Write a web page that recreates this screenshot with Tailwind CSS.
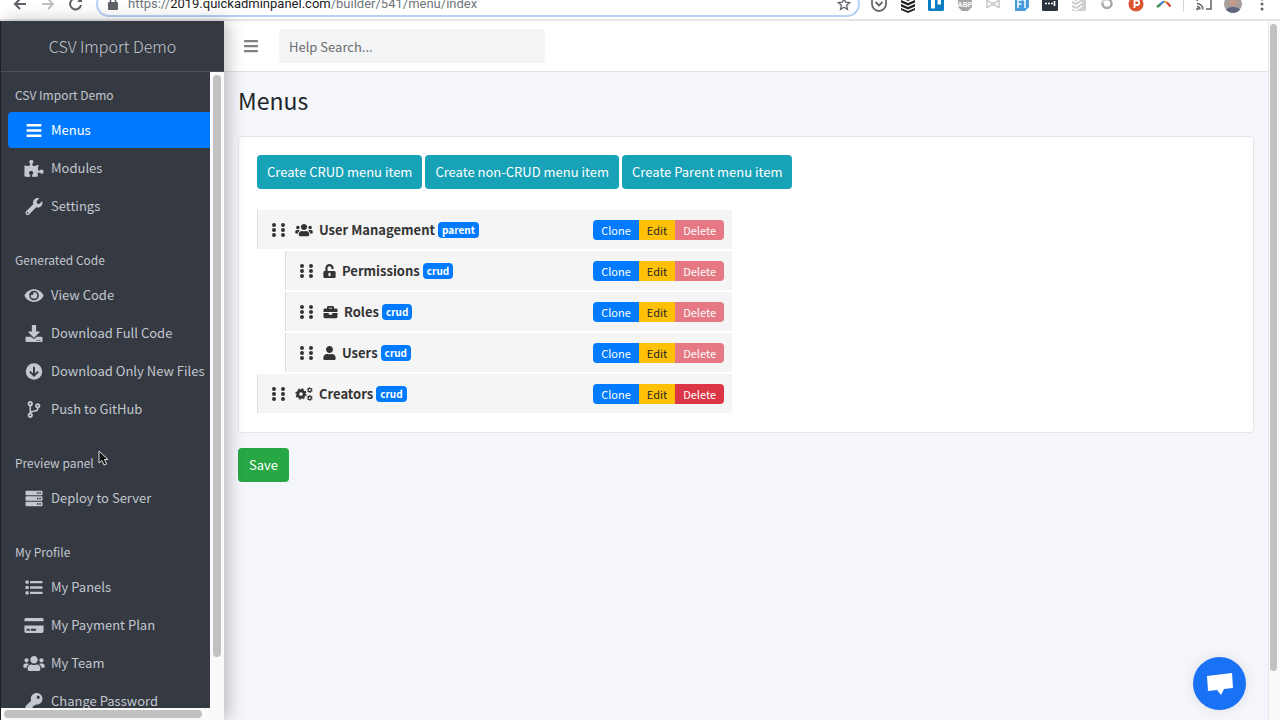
<!DOCTYPE html>
<html lang="en">
<head>
  <meta charset="UTF-8" />
  <meta name="viewport" content="width=device-width, initial-scale=1.0"/>
  <script src="https://cdn.jsdelivr.net/npm/@tailwindcss/browser@4"></script>
  <title>Menus - CSV Import Demo</title>
</head>
<body class="h-screen flex flex-col overflow-hidden bg-white font-['Noto_Sans_CJK_SC','Open_Sans',sans-serif] text-[13px] text-[#212529]">

  <!-- Icon set -->
  <svg class="hidden" xmlns="http://www.w3.org/2000/svg">
    <symbol id="bars" viewBox="0 0 448 512"><path d="M16 132h416c9 0 16-7 16-16V76c0-9-7-16-16-16H16C7 60 0 67 0 76v40c0 9 7 16 16 16zm0 160h416c9 0 16-7 16-16v-40c0-9-7-16-16-16H16c-9 0-16 7-16 16v40c0 9 7 16 16 16zm0 160h416c9 0 16-7 16-16v-40c0-9-7-16-16-16H16c-9 0-16 7-16 16v40c0 9 7 16 16 16z"/></symbol>
    <symbol id="puzzle" viewBox="0 0 576 512"><path d="M519.442 288.651c-41.519 0-59.5 31.593-82.058 31.593C377.409 320.244 432 144 432 144s-196.288 80-196.288-3.297c0-35.827 36.288-46.25 36.288-85.985C272 19.216 243.885 0 210.539 0c-34.654 0-66.366 18.891-66.366 56.346 0 41.364 31.711 59.277 31.711 81.75C175.885 207.719 0 166.758 0 166.758v333.237s178.635 41.047 178.635-28.662c0-22.473-40-40.107-40-81.471 0-37.456 29.25-56.346 63.577-56.346 33.673 0 61.788 19.216 61.788 54.717 0 39.735-36.288 50.158-36.288 85.985 0 60.803 129.675 25.73 181.23 25.73 0 0-34.725-120.101 25.827-120.101 35.962 0 46.423 36.152 86.308 36.152C556.712 416 576 387.99 576 354.443c0-34.199-18.962-65.792-56.558-65.792z"/></symbol>
    <symbol id="wrench" viewBox="0 0 512 512"><path d="M507.73 109.1c-2.24-9.03-13.54-12.09-20.12-5.51l-74.36 74.36-67.88-11.31-11.31-67.88 74.36-74.36c6.62-6.62 3.43-17.9-5.66-20.16-47.38-11.74-99.55.91-136.58 37.93-39.64 39.64-50.55 97.1-34.05 147.2L18.74 402.76c-24.99 24.99-24.99 65.51 0 90.5 24.99 24.99 65.51 24.99 90.5 0l213.21-213.21c50.12 16.71 107.47 5.68 147.37-34.22 37.07-37.07 49.7-89.32 37.91-136.73zM64 472c-13.25 0-24-10.75-24-24 0-13.26 10.75-24 24-24s24 10.74 24 24c0 13.25-10.75 24-24 24z"/></symbol>
    <symbol id="eye" viewBox="0 0 576 512"><path d="M572.52 241.4C518.29 135.59 410.93 64 288 64S57.68 135.64 3.48 241.41a32.35 32.35 0 0 0 0 29.19C57.71 376.41 165.07 448 288 448s230.32-71.64 284.52-177.41a32.35 32.35 0 0 0 0-29.19zM288 400a144 144 0 1 1 144-144 143.93 143.93 0 0 1-144 144zm0-240a95.31 95.31 0 0 0-25.31 3.79 47.85 47.85 0 0 1-66.9 66.9A95.78 95.78 0 1 0 288 160z"/></symbol>
    <symbol id="download" viewBox="0 0 512 512"><path d="M216 0h80c13.3 0 24 10.7 24 24v168h87.7c17.8 0 26.7 21.5 14.1 34.1L269.7 378.3c-7.5 7.5-19.8 7.5-27.3 0L90.1 226.1c-12.6-12.6-3.7-34.1 14.1-34.1H192V24c0-13.3 10.7-24 24-24zm296 376v112c0 13.3-10.7 24-24 24H24c-13.3 0-24-10.7-24-24V376c0-13.3 10.7-24 24-24h146.7l49 49c20.1 20.1 52.5 20.1 72.6 0l49-49H488c13.3 0 24 10.7 24 24zm-124 88c0-11-9-20-20-20s-20 9-20 20 9 20 20 20 20-9 20-20zm64 0c0-11-9-20-20-20s-20 9-20 20 9 20 20 20 20-9 20-20z"/></symbol>
    <symbol id="circle-down" viewBox="0 0 512 512"><circle cx="256" cy="256" r="248"/><path d="M256 110v270M130 258l126 126 126-126" fill="none" stroke="#353941" stroke-width="58"/></symbol>
    <symbol id="branch" viewBox="0 0 384 512"><path d="M384 144c0-44.2-35.8-80-80-80s-80 35.8-80 80c0 36.4 24.3 67.1 57.5 76.8-.6 16.1-4.2 28.5-11 36.9-15.4 19.2-49.3 22.4-85.2 25.7-28.2 2.6-57.4 5.4-81.3 16.9v-144c32.5-10.2 56-40.5 56-76.3 0-44.2-35.8-80-80-80S0 35.8 0 80c0 35.8 23.5 66.1 56 76.3v199.3C23.5 365.9 0 396.2 0 432c0 44.2 35.8 80 80 80s80-35.8 80-80c0-34-21.2-63.1-51.2-74.6 3.1-5.2 7.8-9.8 14.9-13.4 16.2-8.2 40.4-10.4 66.1-12.8 42.2-3.9 90-8.4 118.2-43.4 14-17.4 21.1-39.8 21.6-67.9 31.6-10.8 54.4-40.7 54.4-75.9zM80 54c14 0 26 12 26 26s-12 26-26 26-26-12-26-26 12-26 26-26zm0 404c-14 0-26-12-26-26s12-26 26-26 26 12 26 26-12 26-26 26zm224-340c14 0 26 12 26 26s-12 26-26 26-26-12-26-26 12-26 26-26z"/></symbol>
    <symbol id="server" viewBox="0 0 512 512"><rect y="20" width="512" height="136" rx="24"/><rect y="188" width="512" height="136" rx="24"/><rect y="356" width="512" height="136" rx="24"/><path d="M344 88h48m24 0h48M344 256h48m24 0h48M344 424h48m24 0h48" stroke="#353941" stroke-width="44"/></symbol>
    <symbol id="list" viewBox="0 0 512 512"><rect y="48" width="96" height="96" rx="20"/><rect y="208" width="96" height="96" rx="20"/><rect y="368" width="96" height="96" rx="20"/><rect x="136" y="62" width="376" height="68" rx="16"/><rect x="136" y="222" width="376" height="68" rx="16"/><rect x="136" y="382" width="376" height="68" rx="16"/></symbol>
    <symbol id="card" viewBox="0 0 576 512"><path d="M0 432c0 26.500 21.500 48 48 48h480c26.500 0 48-21.500 48-48V256H0v176zm192-68c0-6.600 5.400-12 12-12h136c6.600 0 12 5.400 12 12v40c0 6.600-5.400 12-12 12H204c-6.600 0-12-5.400-12-12v-40zm-128 0c0-6.600 5.400-12 12-12h72c6.600 0 12 5.400 12 12v40c0 6.600-5.400 12-12 12H76c-6.600 0-12-5.400-12-12v-40zM576 80v48H0V80c0-26.500 21.500-48 48-48h480c26.500 0 48 21.500 48 48z"/></symbol>
    <symbol id="users" viewBox="0 0 640 512"><path d="M96 224c35.3 0 64-28.7 64-64s-28.700-64-64-64-64 28.700-64 64 28.700 64 64 64zm448 0c35.300 0 64-28.700 64-64s-28.700-64-64-64-64 28.700-64 64 28.700 64 64 64zm32 32h-64c-17.600 0-33.500 7.100-45.100 18.600 40.300 22.100 68.900 62 75.100 109.400h66c17.700 0 32-14.300 32-32v-32c0-35.300-28.700-64-64-64zm-256 0c61.900 0 112-50.100 112-112S381.900 32 320 32 208 82.100 208 144s50.100 112 112 112zm76.800 32h-8.300c-20.800 10-43.900 16-68.500 16s-47.600-6-68.500-16h-8.300C179.600 288 128 339.600 128 403.200V432c0 26.500 21.500 48 48 48h288c26.500 0 48-21.500 48-48v-28.800c0-63.600-51.600-115.200-115.200-115.200zm-223.700-13.400C161.500 263.100 145.600 256 128 256H64c-35.300 0-64 28.700-64 64v32c0 17.700 14.300 32 32 32h65.900c6.300-47.400 34.900-87.300 75.200-109.400z"/></symbol>
    <symbol id="key" viewBox="0 0 512 512"><path d="M512 176.001C512 273.203 433.202 352 336 352c-11.220 0-22.190-1.062-32.827-3.069l-24.012 27.014A23.999 23.999 0 0 1 261.223 384H224v40c0 13.255-10.745 24-24 24h-40v40c0 13.255-10.745 24-24 24H24c-13.255 0-24-10.745-24-24v-78.059c0-6.365 2.529-12.470 7.029-16.971l161.802-161.802C163.108 213.814 160 195.271 160 176 160 78.798 238.797.001 335.999 0 433.488-.001 512 78.511 512 176.001zM336 128c0 26.510 21.490 48 48 48s48-21.490 48-48-21.490-48-48-48-48 21.490-48 48z"/></symbol>
    <symbol id="unlock" viewBox="0 0 448 512"><path d="M400 256H152V152.900c0-39.600 31.700-72.500 71.300-72.900 40-.4 72.700 32.100 72.700 72v16c0 13.300 10.700 24 24 24h32c13.300 0 24-10.700 24-24v-16C376 68 307.500-.3 223.500 0 139.500.3 72 69.500 72 153.500V256H48c-26.500 0-48 21.500-48 48v160c0 26.500 21.500 48 48 48h352c26.500 0 48-21.500 48-48V304c0-26.500-21.500-48-48-48zM264 408c0 22.100-17.900 40-40 40s-40-17.900-40-40v-48c0-22.100 17.900-40 40-40s40 17.900 40 40v48z"/></symbol>
    <symbol id="briefcase" viewBox="0 0 512 512"><path d="M320 336c0 8.840-7.160 16-16 16h-96c-8.840 0-16-7.160-16-16v-48H0v144c0 25.600 22.400 48 48 48h416c25.600 0 48-22.400 48-48V288H320v48zm144-208h-80V80c0-25.600-22.400-48-48-48H176c-25.600 0-48 22.400-48 48v48H48c-25.600 0-48 22.400-48 48v80h512v-80c0-25.600-22.400-48-48-48zm-144 0H192V96h128v32z"/></symbol>
    <symbol id="user" viewBox="0 0 448 512"><path d="M224 256c70.700 0 128-57.300 128-128S294.700 0 224 0 96 57.300 96 128s57.300 128 128 128zm89.600 32h-16.700c-22.200 10.200-46.900 16-72.900 16s-50.600-5.800-72.900-16h-16.700C60.200 288 0 348.200 0 422.400V464c0 26.500 21.500 48 48 48h352c26.500 0 48-21.500 48-48v-41.600c0-74.200-60.200-134.400-134.400-134.400z"/></symbol>
    <symbol id="cogs" viewBox="0 0 640 512">
      <g fill="none" stroke="currentColor">
        <circle cx="210" cy="256" r="120" stroke-width="104"/>
        <circle cx="210" cy="256" r="184" stroke-width="48" stroke-dasharray="72 72.500"/>
        <circle cx="530" cy="112" r="60" stroke-width="50"/>
        <circle cx="530" cy="112" r="94" stroke-width="28" stroke-dasharray="49 49.400"/>
        <circle cx="530" cy="400" r="60" stroke-width="50"/>
        <circle cx="530" cy="400" r="94" stroke-width="28" stroke-dasharray="49 49.400"/>
      </g>
    </symbol>
    <symbol id="grip" viewBox="0 0 14 14"><circle cx="2" cy="2" r="2"/><circle cx="2" cy="7" r="2"/><circle cx="2" cy="12" r="2"/><circle cx="11" cy="2" r="2"/><circle cx="11" cy="7" r="2"/><circle cx="11" cy="12" r="2"/></symbol>
  </svg>

  <!-- Browser toolbar -->
  <div class="h-[21px] shrink-0 flex flex-col justify-end overflow-hidden border-b-2 border-[#e4e4e4] bg-white">
    <div class="h-[30px] shrink-0 flex items-center pl-3">
      <div class="flex gap-3 text-[#5f6368]">
        <button aria-label="Back"><svg class="size-4" viewBox="0 0 16 16" fill="none" stroke="currentColor" stroke-width="2"><path d="M14 8H3M8 3L3 8l5 5"/></svg></button>
        <button aria-label="Forward" class="text-[#c0c0c0]"><svg class="size-4" viewBox="0 0 16 16" fill="none" stroke="currentColor" stroke-width="2"><path d="M2 8h11M8 3l5 5-5 5"/></svg></button>
        <button aria-label="Reload"><svg class="size-4" viewBox="0 0 16 16" fill="none" stroke="currentColor" stroke-width="2"><path d="M13 9a5.500 5.500 0 1 1-1.500-5"/><path d="M14 1v5H9z" fill="currentColor" stroke="none"/></svg></button>
      </div>
      <div class="ml-3 flex-1 h-[26px] flex items-center rounded-full border-2 border-[#b5d3f7] px-2.5">
        <svg class="mr-2.5 h-3 w-2.5 text-[#5f6368]" viewBox="0 0 10 12" fill="currentColor"><rect y="4" width="10" height="8" rx="1"/><path d="M2.500 5V3a2.500 2.500 0 0 1 5 0v2" fill="none" stroke="currentColor" stroke-width="1.500"/></svg>
        <span class="flex-1 font-[Roboto,sans-serif] text-[13px] leading-5 text-[#70757a]">https://<span class="text-[#202124]">2019.quickadminpanel.com</span>/builder/541/menu/index</span>
        <svg class="mr-[-3px] size-3.5" viewBox="0 0 14 14" fill="none" stroke="#5f6368" stroke-width="1.300"><path d="M7 1.500l1.600 3.700 4 .4-3 2.700.9 4L7 10.200l-3.500 2.100.9-4-3-2.700 4-.4z"/></svg>
      </div>
      <div class="ml-2.5 w-[303px] flex items-center justify-between">
        <svg class="size-[18px]" viewBox="0 0 18 18" fill="none" stroke="#686868" stroke-width="1.800"><path d="M2 2h14v7a7 7 0 0 1-14 0z"/><path d="M5.500 7L9 10.500 12.500 7"/></svg>
        <svg class="size-[18px]" viewBox="0 0 18 18" fill="#222"><path d="M9 0l7 3-7 3-7-3z"/><path d="M2 5l7 3 7-3v2.500l-7 3-7-3z"/><path d="M2 9l7 3 7-3v2.500l-7 3-7-3z"/><path d="M2 13l7 3 7-3v2l-7 3-7-3z"/></svg>
        <svg class="size-[18px]" viewBox="0 0 18 18"><rect x="1" y="1" width="16" height="15" rx="1.500" fill="#0a7cc4"/><path d="M4 3h4v10.500H4zM10.500 3h3.500v6.500h-3.500z" fill="#fff"/></svg>
        <svg class="size-[18px]" viewBox="0 0 18 18"><path d="M6 1h6l4 4v7l-4 4H6l-4-4V5z" fill="#a5a5a5"/><text x="9" y="11.500" font-size="7" font-weight="700" fill="#fff" text-anchor="middle" font-family="Liberation Sans">ABP</text></svg>
        <svg class="size-[18px]" viewBox="0 0 18 18" fill="none" stroke="#c8c8c8" stroke-width="1.500"><path d="M3 5l4 3h4l4-3M3 13l4-3h4l4 3M3 5v8M15 5v8"/></svg>
        <svg class="size-[18px]" viewBox="0 0 18 18"><path d="M2 1h10l4 4v7l-4 4H2z" fill="#459bdc"/><path d="M5 13V5h4M5 9h3.500M10 5h2v8" stroke="#fff" stroke-width="1.500" fill="none"/></svg>
        <svg class="size-[18px]" viewBox="0 0 18 18"><rect x="1" y="1" width="16" height="15" rx="1.500" fill="#2c3440"/><path d="M4 8.500h2m1 0h2m1 0h2M13.500 6v5" stroke="#fff" stroke-width="1.700"/></svg>
        <svg class="size-[18px]" viewBox="0 0 18 18"><rect x="2" y="1" width="14" height="15" rx="1.500" fill="#cfcfcf"/><path d="M2 5l4 2 6-4M2 9l4 2 6-4M2 13l4 2 6-4" stroke="#fff" stroke-width="1.400" fill="none"/></svg>
        <svg class="size-[18px]" viewBox="0 0 18 18" fill="none"><circle cx="9" cy="8.500" r="4.500" stroke="#a8a8a8" stroke-width="2.500"/><path d="M9 4a4.500 4.500 0 0 0-4.500 4.500" stroke="#dadada" stroke-width="2"/></svg>
        <svg class="size-[18px]" viewBox="0 0 18 18"><circle cx="9" cy="9" r="7.500" fill="#da552f"/><path d="M7.500 13V5.500H10a2 2 0 0 1 0 4.500H7.500" stroke="#fff" stroke-width="1.800" fill="none"/></svg>
        <svg class="size-[18px]" viewBox="0 0 18 18" fill="none" stroke-width="2.200"><path d="M2 12l4-3" stroke="#3a8f4c"/><path d="M5 9.500C6.500 8 8 7 9.500 6.500" stroke="#3d7fd6"/><path d="M9 6.500c1.500 0 2.500.5 3.500 1.500" stroke="#f2a33a"/><path d="M12 7.500l3.500 4" stroke="#d44a35"/></svg>
      </div>
      <div class="ml-2.5 h-4 w-px bg-[#d5d5d5]"></div>
      <div class="ml-3 flex items-center gap-3 pr-2.5">
        <svg class="size-4" viewBox="0 0 16 16" fill="none" stroke="#5f6368" stroke-width="1.500"><path d="M1 5V2h14v11h-5M1 7.500a6 6 0 0 1 6 6M1 10.500a3 3 0 0 1 3 3"/><circle cx="1.500" cy="13" r=".6"/></svg>
        <svg class="size-[18px]" viewBox="0 0 18 18"><circle cx="9" cy="9" r="9" fill="#a79d9a"/><path d="M2 14.500a8 5 0 0 1 14 0 9 9 0 0 1-14 0z" fill="#5f6480"/><circle cx="9" cy="7.500" r="3.500" fill="#c39a88"/></svg>
        <svg class="size-4" viewBox="0 0 16 16" fill="#5f6368"><circle cx="8" cy="3" r="1.500"/><circle cx="8" cy="8" r="1.500"/><circle cx="8" cy="13" r="1.500"/></svg>
      </div>
    </div>
  </div>

  <div class="flex flex-1 min-h-0">

    <!-- Sidebar -->
    <aside class="z-10 flex w-56 shrink-0 flex-col border-l border-[#1d2024] bg-[#353941] text-[#c2c7d0] shadow-[4px_0_16px_rgba(0,0,0,0.25)]">
      <a href="#" class="flex h-[51px] shrink-0 items-center justify-center border-b border-[#4b545c] text-base font-light">CSV Import Demo</a>
      <div class="flex min-h-0 flex-1">
        <nav id="sidebar-nav" class="min-w-0 flex-1 overflow-hidden pl-[7px]"></nav>
        <div class="w-3.5 shrink-0 bg-[#fafafa] px-[3px] pt-[3px]">
          <div class="h-[92%] rounded-full bg-[#c1c1c1]"></div>
        </div>
      </div>
      <div class="h-3 shrink-0 bg-[#fafafa] py-0.5 pl-[3px] pr-[22px]">
        <div class="h-2 rounded-full bg-[#c1c1c1]"></div>
      </div>
    </aside>

    <!-- Main -->
    <div class="flex min-w-0 flex-1 flex-col bg-[#f4f6fb]">
      <header class="flex h-[51px] shrink-0 items-center border-b border-[#dee2e6] bg-white pl-5">
        <button aria-label="Toggle sidebar" class="text-[#808080]"><svg class="h-4 w-3.5" fill="currentColor"><use href="#bars"/></svg></button>
        <input type="text" aria-label="Help Search" placeholder="Help Search..." class="ml-[21px] h-[34px] w-[266px] rounded bg-[#f2f4f6] px-2.5 placeholder:text-[#6c6c6c]">
      </header>

      <main class="flex-1 overflow-hidden px-3.5 pt-2.5">
        <h1 class="text-[23px] leading-9">Menus</h1>
        <section class="mt-[18px] rounded border border-[#e3e5e9] bg-white px-[18px] pt-[18px] pb-[19px]">
          <div class="flex gap-[3px]">
            <button class="h-[34px] rounded bg-[#17a2b8] px-2.5 text-white">Create CRUD menu item</button>
            <button class="h-[34px] rounded bg-[#17a2b8] px-2.5 text-white">Create non-CRUD menu item</button>
            <button class="h-[34px] rounded bg-[#17a2b8] px-2.5 text-white">Create Parent menu item</button>
          </div>
          <ul id="menu-list" class="mt-[21px] flex max-w-[475px] flex-col gap-0.5"></ul>
        </section>
        <button class="mt-[15px] h-[34px] rounded bg-[#28a745] px-[11px] text-white">Save</button>
      </main>
    </div>

    <!-- Page scrollbar -->
    <div class="w-3 shrink-0 border-l border-[#e8e8e8] bg-[#fafafa] px-px pt-[3px]">
      <div class="h-[93%] w-[7px] rounded-full bg-[#c1c1c1]"></div>
    </div>
  </div>

  <!-- Chat launcher -->
  <button aria-label="Open chat" class="fixed right-[34px] bottom-2.5 z-20 flex size-[53px] items-center justify-center rounded-full bg-[#1972f5] shadow-[0_0_12px_rgba(0,0,0,0.1)]">
    <svg class="h-[22px] w-[26px]" viewBox="0 0 26 22" fill="#fff"><path d="M0 3L25 0l1 15-9 1-3 6-4-5-9 1z"/></svg>
  </button>

  <!-- Mouse pointer -->
  <svg class="pointer-events-none absolute left-[98px] top-[450px] z-20 h-4 w-[11px]" viewBox="0 0 11 16"><path d="M1 1v12l3-2.500 2 4.500 2.500-1L6.500 9.500H10z" fill="#111" stroke="#ddd"/></svg>

  <script>
const sections = [
  { title: 'CSV Import Demo', links: [['bars', 'Menus'], ['puzzle', 'Modules'], ['wrench', 'Settings']] },
  { title: 'Generated Code', links: [['eye', 'View Code'], ['download', 'Download Full Code'], ['circle-down', 'Download Only New Files'], ['branch', 'Push to GitHub']] },
  { title: 'Preview panel', links: [['server', 'Deploy to Server']] },
  { title: 'My Profile', links: [['list', 'My Panels'], ['card', 'My Payment Plan'], ['users', 'My Team'], ['key', 'Change Password']] },
];

const menus = [
  { name: 'User Management', icon: 'users', width: 'w-[18px]', type: 'parent', locked: true },
  { name: 'Permissions', icon: 'unlock', width: 'w-[13px]', type: 'crud', child: true, locked: true },
  { name: 'Roles', icon: 'briefcase', width: 'w-[15px]', type: 'crud', child: true, locked: true },
  { name: 'Users', icon: 'user', width: 'w-[13px]', type: 'crud', child: true, locked: true },
  { name: 'Creators', icon: 'cogs', width: 'w-[18px]', type: 'crud' },
];

document.getElementById('sidebar-nav').innerHTML = sections.map((section, i) => `
  <h2 class="${i ? 'pt-6' : 'pt-[13px]'} pb-[7px] pl-[7px] text-xs leading-5">${section.title}</h2>
  ${section.links.map(([icon, label]) => `
    <a href="#" class="mb-0.5 flex h-9 items-center gap-1.5 rounded-l pl-[15px] whitespace-nowrap ${label === 'Menus' ? 'bg-[#007bff] text-white' : ''}">
      <svg class="h-[17px] w-[22px] shrink-0" fill="currentColor"><use href="#${icon}"/></svg>
      <span>${label}</span>
    </a>`).join('')}
`).join('');

document.getElementById('menu-list').innerHTML = menus.map(menu => `
  <li class="flex h-[39px] items-center border-l border-[#dddddd] bg-[#f5f5f5] pr-2 pl-3.5 ${menu.child ? 'ml-7' : ''}">
    <svg class="size-3.5 shrink-0 text-[#333]" fill="currentColor"><use href="#grip"/></svg>
    <svg class="ml-[9px] mr-1.5 h-3.5 shrink-0 text-[#333] ${menu.width}" fill="currentColor"><use href="#${menu.icon}"/></svg>
    <span class="font-bold text-[#333]">${menu.name}</span>
    <span class="ml-[3px] h-4 rounded bg-[#007bff] px-1 text-[10px] leading-[15px] font-bold text-white">${menu.type}</span>
    <span class="ml-auto flex h-5 overflow-hidden rounded-sm text-[11px] leading-5">
      <button class="bg-[#007bff] px-2 text-white">Clone</button>
      <button class="bg-[#ffc107] px-2">Edit</button>
      <button class="bg-[#dc3545] px-2 text-white disabled:opacity-65" ${menu.locked ? 'disabled' : ''}>Delete</button>
    </span>
  </li>
`).join('');
  </script>

</body>
</html>
